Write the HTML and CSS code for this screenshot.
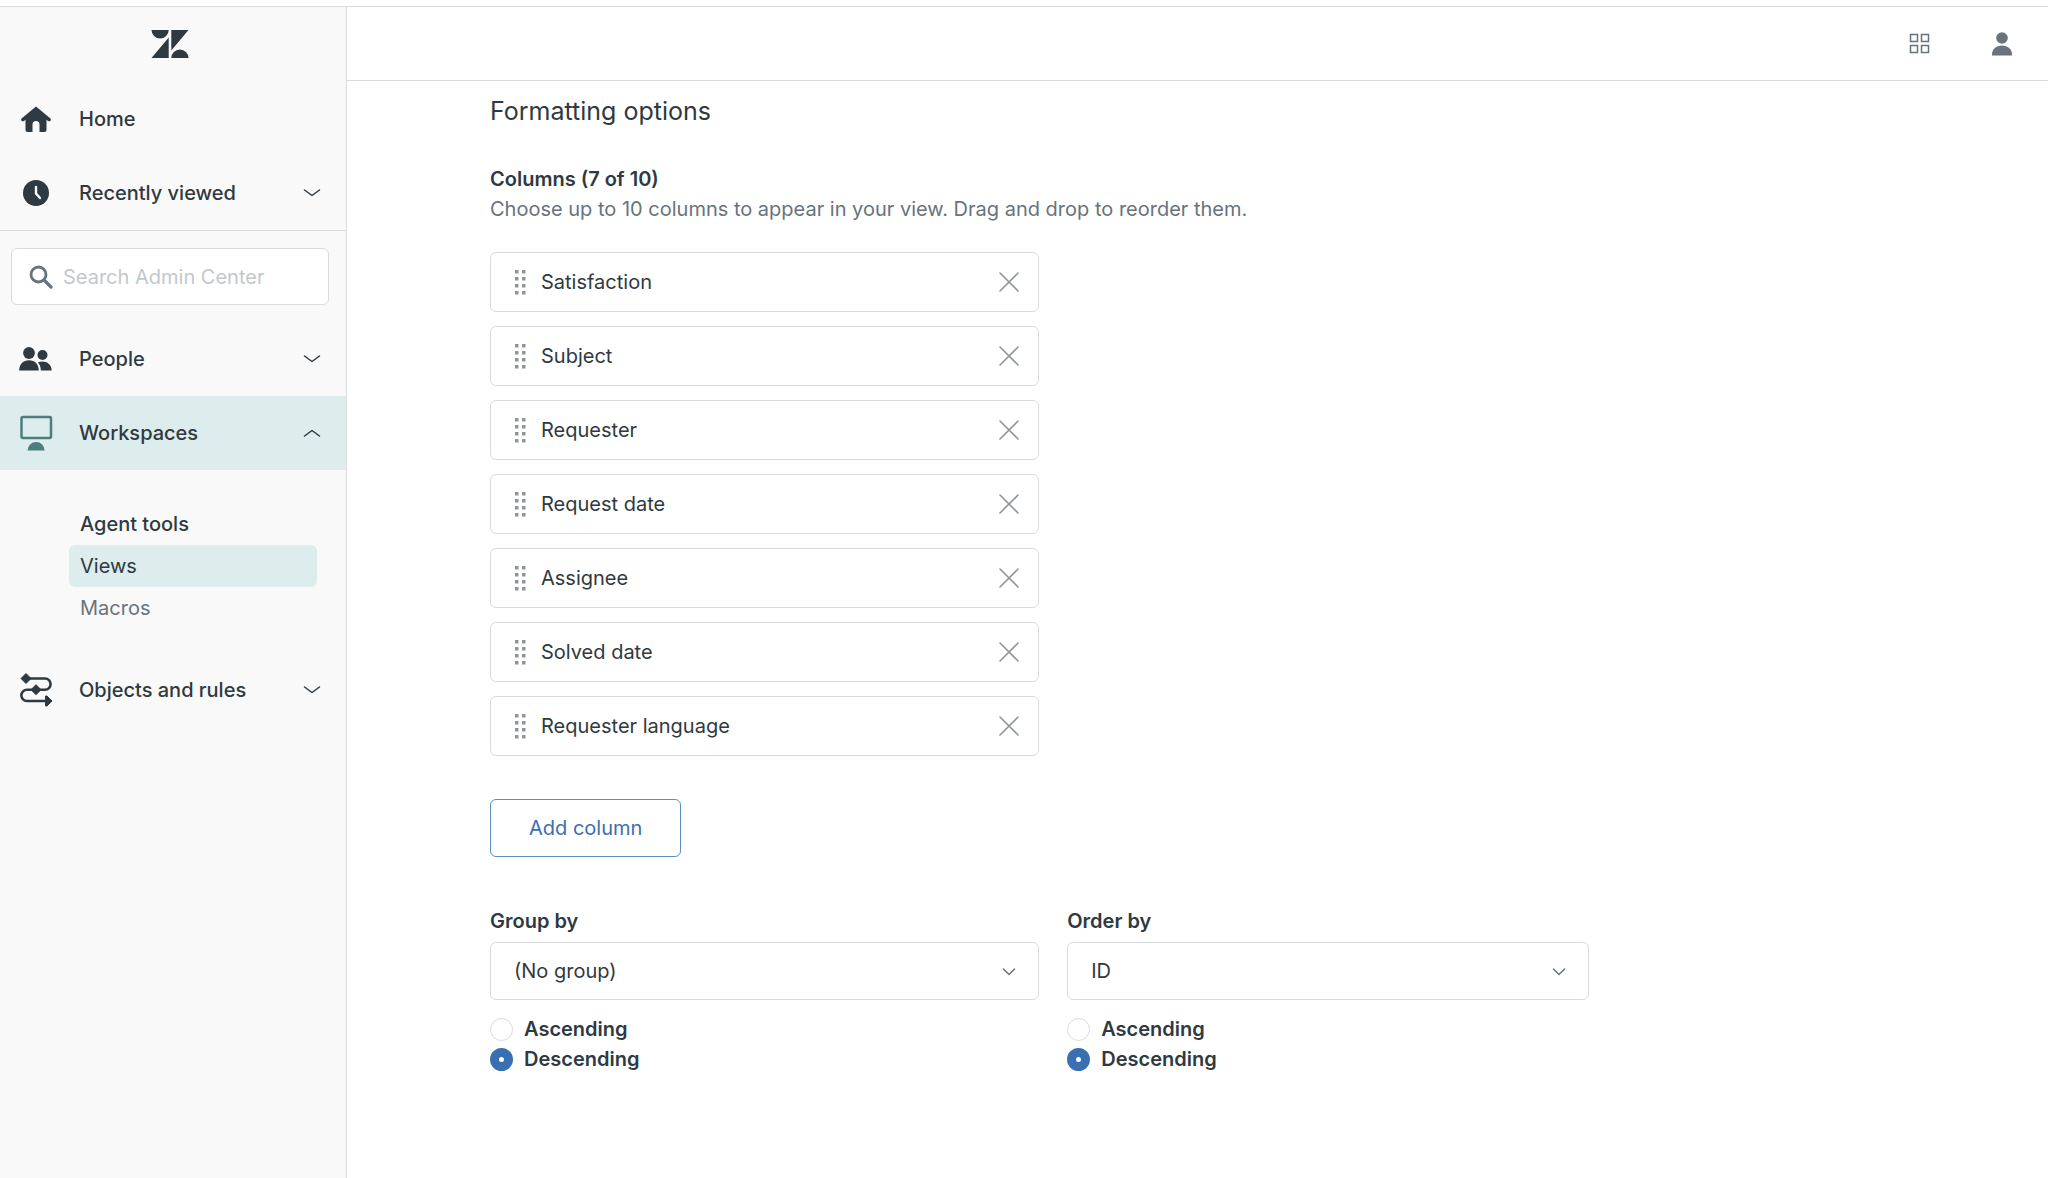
FILE: index.html
```html
<!DOCTYPE html>
<html lang="en">
<head>
<meta charset="utf-8">
<meta name="viewport" content="width=device-width, initial-scale=1">
<title>Views - Admin Center</title>
<link rel="stylesheet" href="styles.css">
</head>
<body>
<!-- shared icons -->
<svg class="sprite" aria-hidden="true">
	<symbol id="chevron" viewBox="0 0 18 10"><path d="M1.5 2l7.5 5.5L16.5 2" fill="none" stroke="currentColor" stroke-width="1.5" stroke-linecap="round" stroke-linejoin="round"/></symbol>
	<symbol id="cross" viewBox="0 0 20 20"><path d="M1 1l18 18M19 1L1 19" fill="none" stroke="currentColor" stroke-width="1.6" stroke-linecap="round"/></symbol>
	<symbol id="grip" viewBox="0 0 12 26"><path d="M1 1h3.500v3.500H1zM8 1h3.500v3.500H8zM1 8h3.500v3.500H1zM8 8h3.500v3.500H8zM1 15h3.500v3.500H1zM8 15h3.500v3.500H8zM1 22h3.500v3.500H1zM8 22h3.500v3.500H8z" fill="currentColor"/></symbol>
</svg>

<div class="app">
	<nav class="sidebar">
		<div class="logo">
			<svg width="38" height="30" viewBox="0 0 38 30" role="img" aria-label="Zendesk">
				<path d="M.5 1h17.2a8.600 8.600 0 0 1-17.2 0zM17.7 8.500V29H.5zM20.300 1h17.2L20.300 21.500zM20.300 29a8.600 8.600 0 0 1 17.2 0z" fill="#2f3941"/>
			</svg>
		</div>
		<a class="nav-item" href="#">
			<svg class="nav-icon" viewBox="0 0 36 36"><path d="M18 5.500L3.500 17.500q-1 1.200 0 2.200t2.500.3l1.500-1.200V29q0 2 2 2h5v-7.500a3.500 3.500 0 0 1 7 0V31h5q2 0 2-2V18.800l1.500 1.200q1.500.7 2.500-.3t0-2.200z" fill="currentColor"/></svg>
			<span>Home</span>
		</a>
		<button class="nav-item" type="button">
			<svg class="nav-icon" viewBox="0 0 36 36"><circle cx="18" cy="18" r="13" fill="currentColor"/><path d="M18 12v6.500l4 4.500" fill="none" stroke="#f9f9f9" stroke-width="2.400" stroke-linecap="round"/></svg>
			<span>Recently viewed</span>
			<svg class="chevron"><use href="#chevron"/></svg>
		</button>
		<div class="search">
			<svg class="search-icon" viewBox="0 0 24 24"><circle cx="9.500" cy="9.500" r="7.500" fill="none" stroke="#68737d" stroke-width="2.800"/><path d="M15 15l7 7" stroke="#68737d" stroke-width="3.200" stroke-linecap="round"/></svg>
			<input class="search-input" type="text" placeholder="Search Admin Center" aria-label="Search Admin Center">
		</div>
		<button class="nav-item" type="button">
			<svg class="nav-icon" viewBox="0 0 36 36"><g fill="currentColor"><circle cx="11" cy="12" r="5.900"/><circle cx="24.500" cy="14" r="5"/><path d="M1.200 29.500c0-6.200 4-10.200 9.800-10.200s9.800 4 9.800 10.200zM22.800 29.500c0-3.600-1-6-3-8 6.500-2.800 13.900.7 13.900 8z"/></g></svg>
			<span>People</span>
			<svg class="chevron"><use href="#chevron"/></svg>
		</button>
		<button class="nav-item active" type="button">
			<svg class="nav-icon" viewBox="0 0 36 36"><rect x="3.500" y="2" width="29.500" height="21" rx="1.500" fill="none" stroke="#4e7e7c" stroke-width="2.500"/><path d="M9.600 35.500a8.500 8.500 0 0 1 17 0z" fill="#4e7e7c"/></svg>
			<span>Workspaces</span>
			<svg class="chevron up"><use href="#chevron"/></svg>
		</button>
		<div class="subnav">
			<h2 class="subnav-title">Agent tools</h2>
			<a class="subnav-link current" href="#">Views</a>
			<a class="subnav-link" href="#">Macros</a>
		</div>
		<button class="nav-item" type="button">
			<svg class="nav-icon" viewBox="0 0 36 36"><path d="M8 6.500h19a5.600 5.600 0 0 1 0 11.200H9a5.600 5.600 0 0 0 0 11.300h20" fill="none" stroke="currentColor" stroke-width="2.600"/><path d="M8 1.500l5 5-5 5-5-5zM18 12.700l5 5-5 5-5-5zM27.500 24h1.500l5 5-5 5h-1.500z" fill="currentColor" stroke="currentColor" stroke-linejoin="round"/></svg>
			<span>Objects and rules</span>
			<svg class="chevron"><use href="#chevron"/></svg>
		</button>
	</nav>

	<div class="page">
		<header class="topbar">
			<button class="icon-btn" type="button" aria-label="Products">
				<svg width="22" height="22" viewBox="0 0 22 22"><path d="M1.500 1.500h7v7h-7zM12.500 1.500h7v7h-7zM1.500 12.500h7v7h-7zM12.500 12.500h7v7h-7z" fill="none" stroke="#68737d" stroke-width="1.500"/></svg>
			</button>
			<button class="icon-btn" type="button" aria-label="Profile">
				<svg width="22" height="24" viewBox="0 0 22 24"><circle cx="11" cy="6" r="5.800" fill="#68737d"/><path d="M1 23.500v-1c0-5.500 4.300-9 10-9s10 3.500 10 9v1z" fill="#68737d"/></svg>
			</button>
		</header>

		<main class="content">
			<h1 class="title">Formatting options</h1>
			<h3 class="label">Columns (7 of 10)</h3>
			<p class="hint">Choose up to 10 columns to appear in your view. Drag and drop to reorder them.</p>

			<div class="grid">
				<ul class="columns">
					<li class="column"><svg class="grip"><use href="#grip"/></svg><span>Satisfaction</span><button class="remove" type="button" aria-label="Remove Satisfaction"><svg><use href="#cross"/></svg></button></li>
					<li class="column"><svg class="grip"><use href="#grip"/></svg><span>Subject</span><button class="remove" type="button" aria-label="Remove Subject"><svg><use href="#cross"/></svg></button></li>
					<li class="column"><svg class="grip"><use href="#grip"/></svg><span>Requester</span><button class="remove" type="button" aria-label="Remove Requester"><svg><use href="#cross"/></svg></button></li>
					<li class="column"><svg class="grip"><use href="#grip"/></svg><span>Request date</span><button class="remove" type="button" aria-label="Remove Request date"><svg><use href="#cross"/></svg></button></li>
					<li class="column"><svg class="grip"><use href="#grip"/></svg><span>Assignee</span><button class="remove" type="button" aria-label="Remove Assignee"><svg><use href="#cross"/></svg></button></li>
					<li class="column"><svg class="grip"><use href="#grip"/></svg><span>Solved date</span><button class="remove" type="button" aria-label="Remove Solved date"><svg><use href="#cross"/></svg></button></li>
					<li class="column"><svg class="grip"><use href="#grip"/></svg><span>Requester language</span><button class="remove" type="button" aria-label="Remove Requester language"><svg><use href="#cross"/></svg></button></li>
				</ul>
			</div>

			<button class="add-btn" type="button">Add column</button>

			<form class="grid">
				<div class="field">
					<label class="label" for="group-by">Group by</label>
					<div class="select-wrap">
						<select class="select" id="group-by"><option>(No group)</option></select>
						<svg class="select-arrow" viewBox="0 0 14 10"><path d="M1.500 2L7 7.500 12.500 2" fill="none" stroke="currentColor" stroke-width="1.500" stroke-linecap="round"/></svg>
					</div>
					<label class="radio"><input type="radio" name="group-dir">Ascending</label>
					<label class="radio"><input type="radio" name="group-dir" checked>Descending</label>
				</div>
				<div class="field">
					<label class="label" for="order-by">Order by</label>
					<div class="select-wrap">
						<select class="select" id="order-by"><option>ID</option></select>
						<svg class="select-arrow" viewBox="0 0 14 10"><path d="M1.500 2L7 7.500 12.500 2" fill="none" stroke="currentColor" stroke-width="1.500" stroke-linecap="round"/></svg>
					</div>
					<label class="radio"><input type="radio" name="order-dir">Ascending</label>
					<label class="radio"><input type="radio" name="order-dir" checked>Descending</label>
				</div>
			</form>
		</main>
	</div>
</div>
</body>
</html>
```

FILE: styles.css
```css
*{box-sizing:border-box;}
body{margin:0;padding-top:6px;font-family:Inter,"Liberation Sans",sans-serif;font-size:20px;line-height:30px;color:#2f3941;background:#fff;}
h1,h2,h3,p,ul{margin:0;padding:0;}
button,input,select{font:inherit;color:inherit;}
button{cursor:pointer;}
.sprite{display:none;}
.app{display:flex;min-height:calc(100vh - 6px);border-top:1px solid #d8dcde;}

/* sidebar */
.sidebar{flex:none;width:347px;background:#f9f9f9;border-right:1px solid #d8dcde;}
.logo{display:flex;justify-content:center;height:75px;padding:22px 7px 0 0;}
.nav-item{display:flex;align-items:center;width:100%;height:74px;padding:0 25px 0 18px;border:0;background:none;font-weight:500;text-align:left;text-decoration:none;color:#2f3941;}
.nav-item span{flex:1;margin-left:25px;}
.nav-icon{width:36px;height:36px;}
.chevron{width:18px;height:10px;}
.chevron.up{transform:rotate(180deg);}
.nav-item.active{background:#ddecec;}
.search{display:flex;align-items:center;height:57px;margin:18px 17px 17px 11px;padding:0 17px;background:#fff;border:1px solid #d8dcde;border-radius:6px;position:relative;}
.search::before{content:"";position:absolute;left:-12px;right:-18px;top:-19px;border-top:1px solid #d8dcde;}
.search-icon{flex:none;width:24px;height:24px;}
.search-input{flex:1;min-width:0;margin-left:10px;padding:0;border:0;outline:0;background:none;}
.search-input::placeholder{color:#c2c8cc;opacity:1;}
.subnav{padding:33px 29px 24px 69px;}
.subnav-title,.subnav-link{display:block;padding:0 11px;line-height:42px;border-radius:6px;}
.subnav-title{font-size:20px;font-weight:500;}
.subnav-link{color:#68737d;text-decoration:none;}
.subnav-link.current{color:#2f3941;background:#ddecec;}

/* top bar */
.page{flex:1;min-width:0;}
.topbar{display:flex;justify-content:flex-end;align-items:center;gap:60px;height:74px;padding-right:35px;border-bottom:1px solid #d8dcde;}
.icon-btn{display:flex;padding:0;border:0;background:none;}

/* formatting options */
.content{max-width:1242px;padding:14px 0 40px 143px;}
.title{font-size:25px;font-weight:400;line-height:32px;margin-bottom:37px;}
.label{display:block;font-size:20px;font-weight:600;line-height:30px;}
.hint{color:#68737d;margin-bottom:28px;}
.grid{display:grid;grid-template-columns:20fr 19fr;column-gap:28px;}
.columns{display:flex;flex-direction:column;gap:14px;list-style:none;}
.column{display:flex;align-items:center;height:60px;padding:0 19px 0 23px;border:1px solid #d8dcde;border-radius:6px;}
.column span{flex:1;margin-left:15px;}
.grip{width:12px;height:26px;color:#8f9499;}
.remove{display:flex;padding:0;border:0;background:none;color:#8f9499;}
.remove svg{width:20px;height:20px;}
.add-btn{display:block;height:58px;margin:43px 0 49px;padding:0 38px;background:#fff;border:1px solid #5a8fbf;border-radius:6px;color:#3b6fb4;}
.select-wrap{position:relative;margin:6px 0 14px;}
.select{display:block;width:100%;height:58px;padding:0 50px 0 23px;background:#fff;border:1px solid #d8dcde;border-radius:6px;appearance:none;}
.select-arrow{position:absolute;right:23px;top:25px;width:14px;height:10px;color:#68737d;pointer-events:none;}
.radio{display:flex;align-items:center;font-weight:600;}
.radio input{appearance:none;width:23px;height:23px;margin:0 11px 0 0;border:1px solid #d8dcde;border-radius:50%;background:#fff;}
.radio input:checked{border:9px solid #3b6fb4;}
```
